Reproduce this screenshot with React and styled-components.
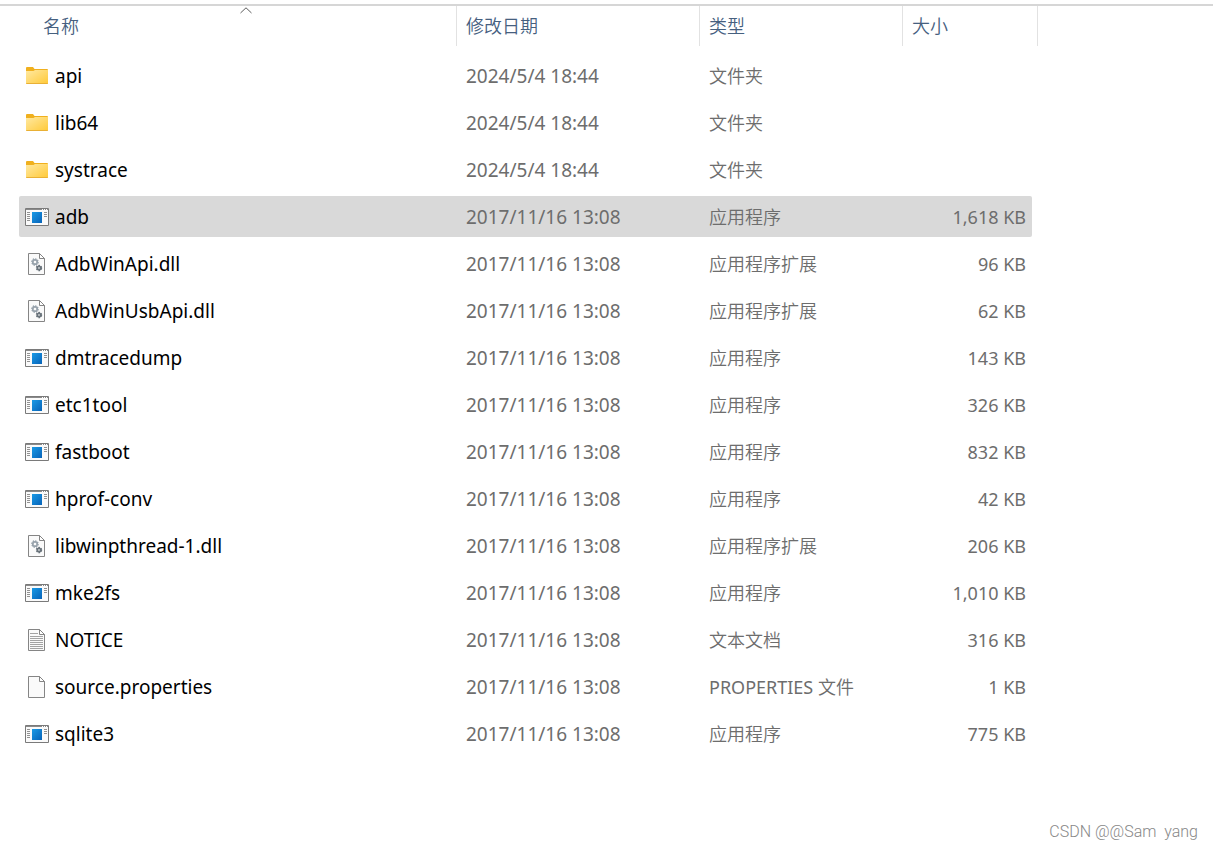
import { Fragment } from "react";
import styled, { createGlobalStyle } from "styled-components";

const files = [
  { name: "api", date: "2024/5/4 18:44", type: "文件夹", icon: "folder" },
  { name: "lib64", date: "2024/5/4 18:44", type: "文件夹", icon: "folder" },
  { name: "systrace", date: "2024/5/4 18:44", type: "文件夹", icon: "folder" },
  { name: "adb", date: "2017/11/16 13:08", type: "应用程序", size: "1,618 KB", icon: "app", selected: true },
  { name: "AdbWinApi.dll", date: "2017/11/16 13:08", type: "应用程序扩展", size: "96 KB", icon: "dll" },
  { name: "AdbWinUsbApi.dll", date: "2017/11/16 13:08", type: "应用程序扩展", size: "62 KB", icon: "dll" },
  { name: "dmtracedump", date: "2017/11/16 13:08", type: "应用程序", size: "143 KB", icon: "app" },
  { name: "etc1tool", date: "2017/11/16 13:08", type: "应用程序", size: "326 KB", icon: "app" },
  { name: "fastboot", date: "2017/11/16 13:08", type: "应用程序", size: "832 KB", icon: "app" },
  { name: "hprof-conv", date: "2017/11/16 13:08", type: "应用程序", size: "42 KB", icon: "app" },
  { name: "libwinpthread-1.dll", date: "2017/11/16 13:08", type: "应用程序扩展", size: "206 KB", icon: "dll" },
  { name: "mke2fs", date: "2017/11/16 13:08", type: "应用程序", size: "1,010 KB", icon: "app" },
  { name: "NOTICE", date: "2017/11/16 13:08", type: "文本文档", size: "316 KB", icon: "text" },
  { name: "source.properties", date: "2017/11/16 13:08", extension: "PROPERTIES ", type: "文件", size: "1 KB", icon: "blank" },
  { name: "sqlite3", date: "2017/11/16 13:08", type: "应用程序", size: "775 KB", icon: "app" },
];

export default function App() {
  return (
    <Fragment>
      <GlobalStyle />
      <Page>
        <Table>
          <TableHead>
            <HeaderRow>
              <HeaderCell aria-sort="ascending">
                <SortButton $first>名称</SortButton>
                <SortArrow viewBox="0 0 12 7" aria-hidden="true">
                  <path d="M.5 6 6 .8 11.5 6" fill="none" stroke="#5c5c5c" />
                </SortArrow>
              </HeaderCell>
              <HeaderCell>
                <SortButton>修改日期</SortButton>
              </HeaderCell>
              <HeaderCell>
                <SortButton>类型</SortButton>
              </HeaderCell>
              <HeaderCell>
                <SortButton>大小</SortButton>
              </HeaderCell>
            </HeaderRow>
          </TableHead>
          <TableBody>
            {files.map((file) => (
              <Row key={file.name} $selected={file.selected}>
                <NameCell>
                  <FileIcon kind={file.icon} />
                  {file.name}
                </NameCell>
                <DateCell>{file.date}</DateCell>
                <TypeCell>
                  {file.extension && <Extension>{file.extension}</Extension>}
                  {file.type}
                </TypeCell>
                <SizeCell>{file.size}</SizeCell>
              </Row>
            ))}
          </TableBody>
        </Table>
        <Watermark>CSDN @@Sam{"  "}yang</Watermark>
      </Page>
    </Fragment>
  );
}

function FileIcon({ kind }) {
  return (
    <Icon viewBox="0 0 24 25" aria-hidden="true">
      {kind === "folder" && <Folder />}
      {kind === "app" && <Application />}
      {kind === "dll" && (
        <Sheet>
          <Gear x={10} y={11} r={2.6} stroke="#98a3ac" />
          <Gear x={14} y={17} r={2} stroke="#69737b" />
        </Sheet>
      )}
      {kind === "text" && (
        <Sheet>
          <path
            d="M5 6.5h8M5 9.5h13M5 11.5h13M5 13.5h13M5 15.5h13M5 17.5h13M5 19.5h13M5 21.5h13"
            stroke="#a3a3a3"
          />
        </Sheet>
      )}
      {kind === "blank" && <Sheet />}
    </Icon>
  );
}

function Folder() {
  return (
    <>
      <defs>
        <linearGradient id="folder" x1="0" y1="0" x2="1" y2="1">
          <stop offset="0" stopColor="#ffe9a2" />
          <stop offset="1" stopColor="#ffc937" />
        </linearGradient>
      </defs>
      <path d="M1 5q0-1 1-1h6l1.500 2H22q1 0 1 1v3H1z" fill="#f0b01e" />
      <path d="M1 8h7.500L10 7h13v13q0 1-1 1H2q-1 0-1-1z" fill="url(#folder)" />
      <path d="M1 20h22q0 1-1 1H2q-1 0-1-1z" fill="#e9b035" />
    </>
  );
}

function Application() {
  return (
    <>
      <defs>
        <linearGradient id="app" x1="0" y1="0" x2="1" y2="1">
          <stop offset="0" stopColor="#1a9ae6" />
          <stop offset="1" stopColor="#0863b8" />
        </linearGradient>
      </defs>
      <path d="M.5 4.500h23v17H.5z" fill="#fafafa" stroke="#7a7a7a" />
      <path d="M1 5.500h22" stroke="#8a8a8a" />
      <path d="M17 5.500h1M19 5.500h1M21 5.500h1" stroke="#fff" />
      <path d="M2 8.500h3M2 10.500h3M2 12.500h3M2 14.500h3M2 16.500h3" stroke="#929292" />
      <path d="M19 8.500h3M19 10.500h3M19 12.500h3" stroke="#929292" />
      <path d="M7 8h10v11H7z" fill="url(#app)" />
    </>
  );
}

function Sheet({ children }) {
  return (
    <>
      <path d="M3.500 2.500h11l5 5v16h-16z" fill="#fafafa" stroke="#858585" />
      {children}
      <path d="M14.500 2.500v5h5z" fill="#fff" stroke="#858585" />
    </>
  );
}

function Gear({ x, y, r, stroke }) {
  return (
    <>
      <circle cx={x} cy={y} r={r} fill="none" stroke={stroke} strokeWidth="2.400" strokeDasharray="1.2 .8" />
      <circle cx={x} cy={y} r={r - 0.3} fill="none" stroke={stroke} strokeWidth="1.600" />
    </>
  );
}

const GlobalStyle = createGlobalStyle`
  * {
    box-sizing: border-box;
  }
  body {
    margin: 0;
    background: #fff;
    font-family: "Noto Sans", "Noto Sans CJK SC", sans-serif;
    font-size: 18px;
    line-height: 24px;
  }
`;

const Page = styled.main`
  display: flex;
  flex-direction: column;
  min-height: 100vh;
  padding-top: 4px;
`;

const Table = styled.table`
  display: block;
  border-top: 2px solid #d6d6d6;
  padding: 0 175px 0 19px;
`;

const TableHead = styled.thead`
  display: block;
`;

const TableBody = styled.tbody`
  display: block;
`;

const HeaderRow = styled.tr`
  display: grid;
  grid-template-columns: 1fr 243px 203px 135px;
  height: 40px;
  margin-bottom: 9px;
`;

const HeaderCell = styled.th`
  position: relative;
  display: flex;
  padding: 0;
  border-right: 1px solid #e2e2e2;
`;

const SortButton = styled.button`
  flex: 1;
  padding: 0 0 0 ${(props) => (props.$first ? "24px" : "9px")};
  border: 0;
  background: transparent;
  color: #46607f;
  font: inherit;
  font-weight: 350;
  text-align: left;
`;

const SortArrow = styled.svg`
  position: absolute;
  top: 1px;
  left: 16px;
  right: 0;
  width: 12px;
  height: 7px;
  margin: 0 auto;
`;

const Row = styled.tr`
  display: grid;
  grid-template-columns: 1fr 243px 203px 129px;
  align-items: center;
  height: 41px;
  margin: 0 6px 6px 0;
  border-radius: 2px;
  background: ${(props) => (props.$selected ? "#d9d9d9" : "transparent")};
`;

const Cell = styled.td`
  padding: 0 0 0 9px;
  color: #6d6d6d;
  white-space: nowrap;
`;

const NameCell = styled(Cell)`
  display: flex;
  align-items: center;
  gap: 6px;
  padding-left: 6px;
  color: #000;
  font-size: 19px;
`;

const DateCell = styled(Cell)`
  font-size: 19px;
`;

const TypeCell = styled(Cell)`
  font-weight: 350;
`;

const Extension = styled.span`
  font-weight: 400;
`;

const SizeCell = styled(Cell)`
  padding-right: 6px;
  text-align: right;
`;

const Icon = styled.svg`
  flex: none;
  width: 24px;
  height: 25px;
`;

const Watermark = styled.footer`
  margin-top: auto;
  padding: 0 15px 6px;
  color: #888;
  font-family: Roboto, sans-serif;
  font-size: 16px;
  font-weight: 300;
  text-align: right;
  white-space: pre;
`;
